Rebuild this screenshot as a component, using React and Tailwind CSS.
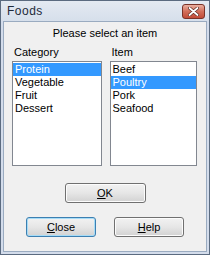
const font = { fontFamily: '"Liberation Sans", Arial, sans-serif' };

function ListBox({ items, selected, className }) {
  return (
    <div className={`h-[105px] border border-[#828790] bg-white pt-[1px] ${className}`}>
      {items.map((it) => (
        <div
          key={it}
          className={`h-[13px] pl-[2px] text-[11px] leading-[13px] ${
            it === selected ? "bg-[#3399ff] text-white" : "text-black"
          }`}
        >
          {it}
        </div>
      ))}
    </div>
  );
}

function Button({ label, mnemonic, width, focused }) {
  const rest = label.slice(1);
  return (
    <div
      className={`flex h-[20px] items-center justify-center rounded-[3px] border text-[11px] text-black ${width} ${
        focused
          ? "border-[#3c7fb1] shadow-[inset_0_0_0_1px_#a6dcf7] bg-gradient-to-b from-[#f2f2f2] via-[#e6e6e6] to-[#d2d2d2]"
          : "border-[#707070] shadow-[inset_0_0_0_1px_#fcfcfc] bg-gradient-to-b from-[#f2f2f2] via-[#e6e6e6] to-[#d2d2d2]"
      }`}
    >
      <span className="underline underline-offset-1">{mnemonic}</span>
      {rest}
    </div>
  );
}

export default function App() {
  return (
    <div style={font} className="w-[210px] h-[255px] bg-white">
      <div className="flex h-full w-full flex-col border border-[#5b6b80] bg-[#d3dceb]">
        {/* title bar */}
        <div className="flex h-[20px] shrink-0 items-center justify-between bg-gradient-to-b from-[#e4eaf2] to-[#d6dfeb] pl-[6px] pr-[4px]">
          <span className="text-[12px] tracking-[0.5px] text-[#1e2a3a]">Foods</span>
          <div className="flex h-[15px] w-[23px] items-center justify-center rounded-[3px] border border-[#7a3328] bg-gradient-to-b from-[#eab0a1] via-[#d26e5a] to-[#c24b37]">
            <svg width="11" height="9" viewBox="0 0 11 9">
              <path d="M1.5 1 L9.5 8 M9.5 1 L1.5 8" stroke="#5a2a22" strokeWidth="3.2" strokeLinecap="round" />
              <path d="M1.5 1 L9.5 8 M9.5 1 L1.5 8" stroke="#ffffff" strokeWidth="1.8" strokeLinecap="round" />
            </svg>
          </div>
        </div>
        {/* client area */}
        <div className="mx-[2px] mb-[2px] flex flex-1 flex-col border border-[#9aabc0] bg-[#f0f0f0]">
          <div className="pt-[5px] text-center text-[11px] leading-[13px] text-black">
            Please select an item
          </div>
          <div className="mt-[6px] flex gap-[8px] pl-[8px] pr-[9px]">
            <div className="flex w-[90px] flex-col">
              <div className="h-[15px] pl-[2px] text-[11px] leading-[13px] text-black">Category</div>
              <ListBox items={["Protein", "Vegetable", "Fruit", "Dessert"]} selected="Protein" />
            </div>
            <div className="flex w-[88px] flex-col">
              <div className="h-[15px] pl-[2px] text-[11px] leading-[13px] text-black">Item</div>
              <ListBox items={["Beef", "Poultry", "Pork", "Seafood"]} selected="Poultry" />
            </div>
          </div>
          <div className="mt-[17px] flex justify-center">
            <Button label="OK" mnemonic="O" width="w-[81px]" />
          </div>
          <div className="mt-[14px] flex justify-center gap-[18px]">
            <Button label="Close" mnemonic="C" width="w-[70px]" focused />
            <Button label="Help" mnemonic="H" width="w-[70px]" />
          </div>
        </div>
      </div>
    </div>
  );
}
